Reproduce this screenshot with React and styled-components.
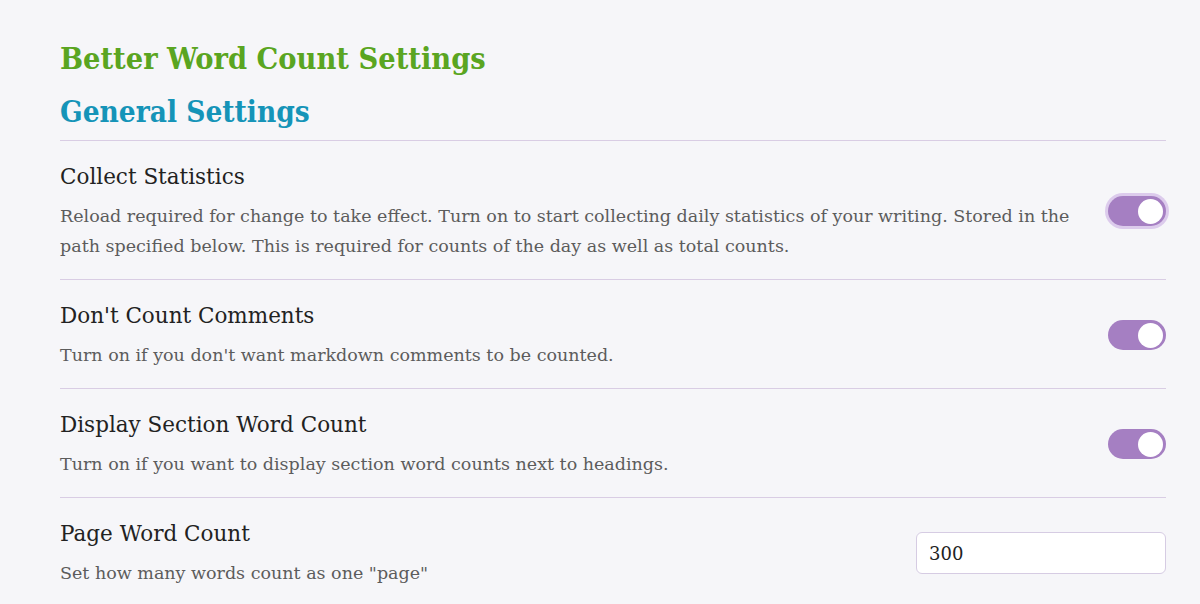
import React, { useState } from "react";
import styled, { createGlobalStyle } from "styled-components";

const GlobalStyle = createGlobalStyle`
  body {
    margin: 0;
    background: #f6f6f9;
    font-family: "DejaVu Serif", "Liberation Serif", serif;
  }
`;

const settings = [
  {
    name: "Collect Statistics",
    desc: "Reload required for change to take effect. Turn on to start collecting daily statistics of your writing. Stored in the path specified below. This is required for counts of the day as well as total counts.",
    kind: "toggle",
    focused: true,
  },
  {
    name: "Don't Count Comments",
    desc: "Turn on if you don't want markdown comments to be counted.",
    kind: "toggle",
  },
  {
    name: "Display Section Word Count",
    desc: "Turn on if you want to display section word counts next to headings.",
    kind: "toggle",
  },
  {
    name: "Page Word Count",
    desc: 'Set how many words count as one "page"',
    kind: "input",
    value: "300",
  },
];

const Toggle = ({ on, focused, onClick }) => (
  <ToggleTrack $on={on} $focused={focused} onClick={onClick}>
    <ToggleKnob $on={on} />
  </ToggleTrack>
);

const SettingItem = ({ item }) => {
  const [on, setOn] = useState(true);
  return (
    <Item>
      <Info>
        <Name>{item.name}</Name>
        <Desc>{item.desc}</Desc>
      </Info>
      <Control>
        {item.kind === "toggle" ? (
          <Toggle on={on} focused={item.focused} onClick={() => setOn(!on)} />
        ) : (
          <TextInput defaultValue={item.value} />
        )}
      </Control>
    </Item>
  );
};

export default function App() {
  return (
    <>
      <GlobalStyle />
      <Page>
        <Title>Better Word Count Settings</Title>
        <Heading>General Settings</Heading>
        <List>
          {settings.map((s) => (
            <SettingItem key={s.name} item={s} />
          ))}
        </List>
      </Page>
    </>
  );
}

const Page = styled.div`
  padding: 36px 34px 0 60px;
`;

const Title = styled.h1`
  margin: 0;
  font-family: "DejaVu Serif Condensed", "DejaVu Serif", serif;
  font-stretch: condensed;
  font-size: 30.4px;
  font-weight: 700;
  line-height: 44px;
  color: #5aa521;
`;

const Heading = styled.h2`
  margin: 10px 0 0;
  font-family: "DejaVu Serif Condensed", "DejaVu Serif", serif;
  font-stretch: condensed;
  font-size: 29.5px;
  font-weight: 700;
  line-height: 44px;
  color: #1594b8;
  padding-bottom: 6px;
  border-bottom: 1px solid #d9cde4;
`;

const List = styled.div`
  display: flex;
  flex-direction: column;
`;

const Item = styled.div`
  display: flex;
  align-items: center;
  gap: 30px;
  padding: 20px 0 18px;
  border-bottom: 1px solid #d9cde4;

  &:last-child {
    border-bottom: none;
  }
`;

const Info = styled.div`
  flex: 1;
  min-width: 0;
`;

const Name = styled.div`
  font-size: 21.5px;
  line-height: 32px;
  color: #222222;
`;

const Desc = styled.div`
  margin-top: 8px;
  font-size: 17.5px;
  line-height: 30px;
  color: #5c5c5c;
`;

const Control = styled.div`
  flex-shrink: 0;
  display: flex;
  align-items: center;
`;

const ToggleTrack = styled.div`
  position: relative;
  width: 58px;
  height: 30px;
  border-radius: 15px;
  background: ${(p) => (p.$on ? "#a57fc2" : "#ccc")};
  box-shadow: ${(p) => (p.$focused ? "0 0 0 3px #dccbec" : "none")};
  cursor: pointer;
`;

const ToggleKnob = styled.div`
  position: absolute;
  top: 3px;
  left: ${(p) => (p.$on ? "30px" : "3px")};
  width: 25px;
  height: 25px;
  border-radius: 50%;
  background: #ffffff;
`;

const TextInput = styled.input`
  width: 250px;
  height: 42px;
  box-sizing: border-box;
  padding: 0 12px;
  border: 1px solid #d6cce3;
  border-radius: 6px;
  background: #ffffff;
  font-family: "DejaVu Serif", "Liberation Serif", serif;
  font-size: 18px;
  color: #222222;
  outline: none;
`;
